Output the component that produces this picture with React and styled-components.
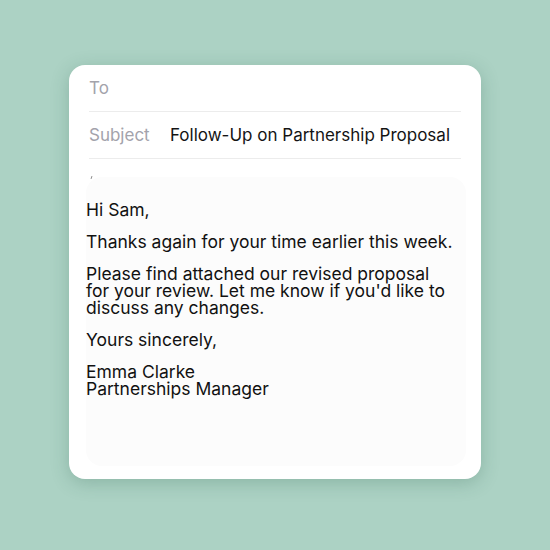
import React from "react";
import styled, { createGlobalStyle } from "styled-components";

const GlobalStyle = createGlobalStyle`
  html, body {
    margin: 0;
    padding: 0;
    background: #acd2c4;
  }
  body {
    font-family: Inter, "Liberation Sans", sans-serif;
  }
`;

const Page = styled.div`
  width: 550px;
  height: 550px;
  box-sizing: border-box;
  padding-bottom: 6px;
  display: flex;
  align-items: center;
  justify-content: center;
  background: #acd2c4;
`;

const Card = styled.div`
  width: 412px;
  height: 414px;
  box-sizing: border-box;
  background: #ffffff;
  border-radius: 16px;
  box-shadow: 0 4px 18px rgba(40, 90, 70, 0.25);
  padding: 0 15px 13px 17px;
  display: flex;
  flex-direction: column;
`;

const FieldRow = styled.div`
  display: flex;
  align-items: center;
  height: 46px;
  margin: 0 5px 0 3px;
  border-bottom: 1px solid #ececec;
  font-size: 17px;
`;

const Label = styled.span`
  color: #a3a3ab;
  width: 81px;
`;

const Value = styled.span`
  color: #141414;
`;

const Body = styled.div`
  flex: 1;
  margin-top: 18px;
  background: #fcfcfc;
  border-radius: 16px;
  padding: 24px 0 0 0;
  color: #111111;
  font-size: 17.5px;
  line-height: 17px;
  position: relative;
`;

const Para = styled.p`
  margin: 0 0 15px 0;
`;

const Caret = styled.span`
  position: absolute;
  left: 5px;
  top: -1px;
  width: 1px;
  height: 3px;
  background: #888;
  transform: rotate(20deg);
`;

export default function App() {
  return (
    <>
      <GlobalStyle />
      <Page>
        <Card>
          <FieldRow>
            <Label>To</Label>
          </FieldRow>
          <FieldRow>
            <Label>Subject</Label>
            <Value>Follow-Up on Partnership Proposal</Value>
          </FieldRow>
          <Body>
            <Caret />
            <Para>Hi Sam,</Para>
            <Para>Thanks again for your time earlier this week.</Para>
            <Para>
              Please find attached our revised proposal
              <br />
              for your review. Let me know if you'd like to
              <br />
              discuss any changes.
            </Para>
            <Para>Yours sincerely,</Para>
            <Para>
              Emma Clarke
              <br />
              Partnerships Manager
            </Para>
          </Body>
        </Card>
      </Page>
    </>
  );
}
